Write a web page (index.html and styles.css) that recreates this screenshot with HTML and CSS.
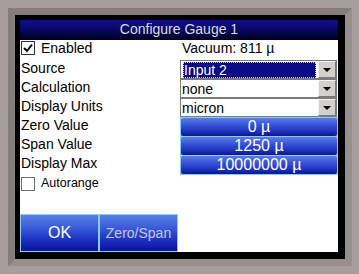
FILE: index.html
```html
<!DOCTYPE html>
<html>
<head>
<meta charset="utf-8">
<link rel="stylesheet" href="styles.css">
</head>
<body>
<div class="bezel">
  <div class="band">
    <div class="rim">
      <div class="screen">
        <div class="title">Configure Gauge 1</div>
        <div class="form">
          <div class="label check-row">
            <span class="cb cb-on"><svg width="12" height="12" viewBox="0 0 12 12"><polyline points="2,6 5,9 10,2.5" fill="none" stroke="#000" stroke-width="2"/></svg></span>
            <span>Enabled</span>
          </div>
          <div class="value">Vacuum: 811 µ</div>

          <div class="label">Source</div>
          <div class="select"><span class="sel-text"><span class="hl">Input 2</span></span><span class="arrow"><span class="tri"></span></span></div>

          <div class="label">Calculation</div>
          <div class="select"><span class="sel-text"><span class="plain">none</span></span><span class="arrow"><span class="tri"></span></span></div>

          <div class="label">Display Units</div>
          <div class="select"><span class="sel-text"><span class="plain">micron</span></span><span class="arrow"><span class="tri"></span></span></div>

          <div class="label">Zero Value</div>
          <div class="vcell"><span class="vbtn">0 µ</span></div>

          <div class="label">Span Value</div>
          <div class="vcell"><span class="vbtn">1250 µ</span></div>

          <div class="label">Display Max</div>
          <div class="vcell vlast"><span class="vbtn">10000000 µ</span></div>

          <div class="label check-row small">
            <span class="cb cb-off"></span>
            <span>Autorange</span>
          </div>
          <div></div>
        </div>
        <div class="spacer"></div>
        <div class="actions">
          <div class="btn btn-ok">OK</div>
          <div class="btn btn-zs">Zero/Span</div>
        </div>
      </div>
    </div>
  </div>
</div>
</body>
</html>
```
FILE: styles.css
```css
html, body {
  margin: 0;
  padding: 0;
}
body {
  width: 359px;
  height: 274px;
  font-family: "Liberation Sans", Arial, sans-serif;
  overflow: hidden;
}
.bezel {
  box-sizing: border-box;
  width: 359px;
  height: 274px;
  background: #a69e9e;
  padding: 8px 7px 8px 8px;
}
.band {
  box-sizing: border-box;
  height: 100%;
  border: 7px solid;
  border-color: #867c7c #978e8e #978e8e #867c7c;
}
.rim {
  box-sizing: border-box;
  height: 100%;
  background: #000;
  padding: 5px 7px 7px 5px;
}
.screen {
  width: 318px;
  height: 232px;
  background: #fff;
  display: flex;
  flex-direction: column;
}
.title {
  height: 20px;
  line-height: 19px;
  text-align: center;
  font-size: 14px;
  color: #dcdce4;
  background: linear-gradient(#0e0e92, #06065a 55%, #00001c);
}
.form {
  display: grid;
  grid-template-columns: 160px 158px;
  grid-template-rows: 20px 19px 19px 19px 19px 19px 20px 20px;
}
.label {
  font-size: 14px;
  line-height: 16px;
  color: #000;
  padding-left: 1px;
}
.check-row {
  display: flex;
  align-items: flex-start;
  gap: 6px;
}
.cb {
  box-sizing: border-box;
  width: 14px;
  height: 14px;
  margin-top: 1px;
  border: 1px solid #333;
  background: #fff;
  display: flex;
  align-items: center;
  justify-content: center;
  flex: none;
}
.cb-off {
  border-color: #707070;
  margin-top: 2px;
}
.small {
  font-size: 12.5px;
  line-height: 17px;
}
.value {
  font-size: 14px;
  line-height: 16px;
  padding-left: 2px;
  color: #000;
}
.select {
  box-sizing: border-box;
  width: 157px;
  height: 19px;
  border: 1px solid #7b7b7b;
  display: flex;
  background: #fff;
}
.sel-text {
  flex: 1;
  display: flex;
  font-size: 14px;
  line-height: 16px;
}
.hl {
  box-sizing: border-box;
  flex: 1;
  margin: 1px 2px 0 2px;
  height: 16px;
  background: #0a0a84;
  color: #fff;
  border: 1px dotted #d6d68c;
  line-height: 15px;
  padding-left: 0;
}
.plain {
  padding-left: 1px;
  margin-top: 1px;
}
.arrow {
  box-sizing: border-box;
  width: 18px;
  height: 17px;
  background: #d2d0cc;
  border: 1px solid;
  border-color: #f4f4f4 #7a7a7a #7a7a7a #f4f4f4;
  display: flex;
  align-items: center;
  justify-content: center;
}
.tri {
  width: 0;
  height: 0;
  border-left: 4px solid transparent;
  border-right: 4px solid transparent;
  border-top: 4px solid #000;
  margin-top: 1px;
}
.vcell {
  background: #84cfee;
  padding: 1px 1px 0 1px;
  display: flex;
}
.vlast {
  padding-bottom: 1px;
}
.vbtn {
  flex: 1;
  border-radius: 2px;
  background: linear-gradient(#5c7ce8, #3552d6 40%, #2034c0 72%, #0c168e);
  color: #fff;
  font-size: 16px;
  line-height: 18px;
  text-align: center;
}
.spacer {
  flex: 1;
}
.actions {
  display: flex;
  height: 38px;
}
.btn {
  box-sizing: border-box;
  width: 79px;
  height: 38px;
  border: 1px solid #84cfee;
  background: linear-gradient(#5a7ee6, #3656d8 40%, #1c30c0 70%, #0a129c);
  display: flex;
  align-items: center;
  justify-content: center;
}
.btn-ok {
  color: #fff;
  font-size: 16px;
}
.btn-zs {
  color: #c6c6ee;
  font-size: 14px;
}
```
